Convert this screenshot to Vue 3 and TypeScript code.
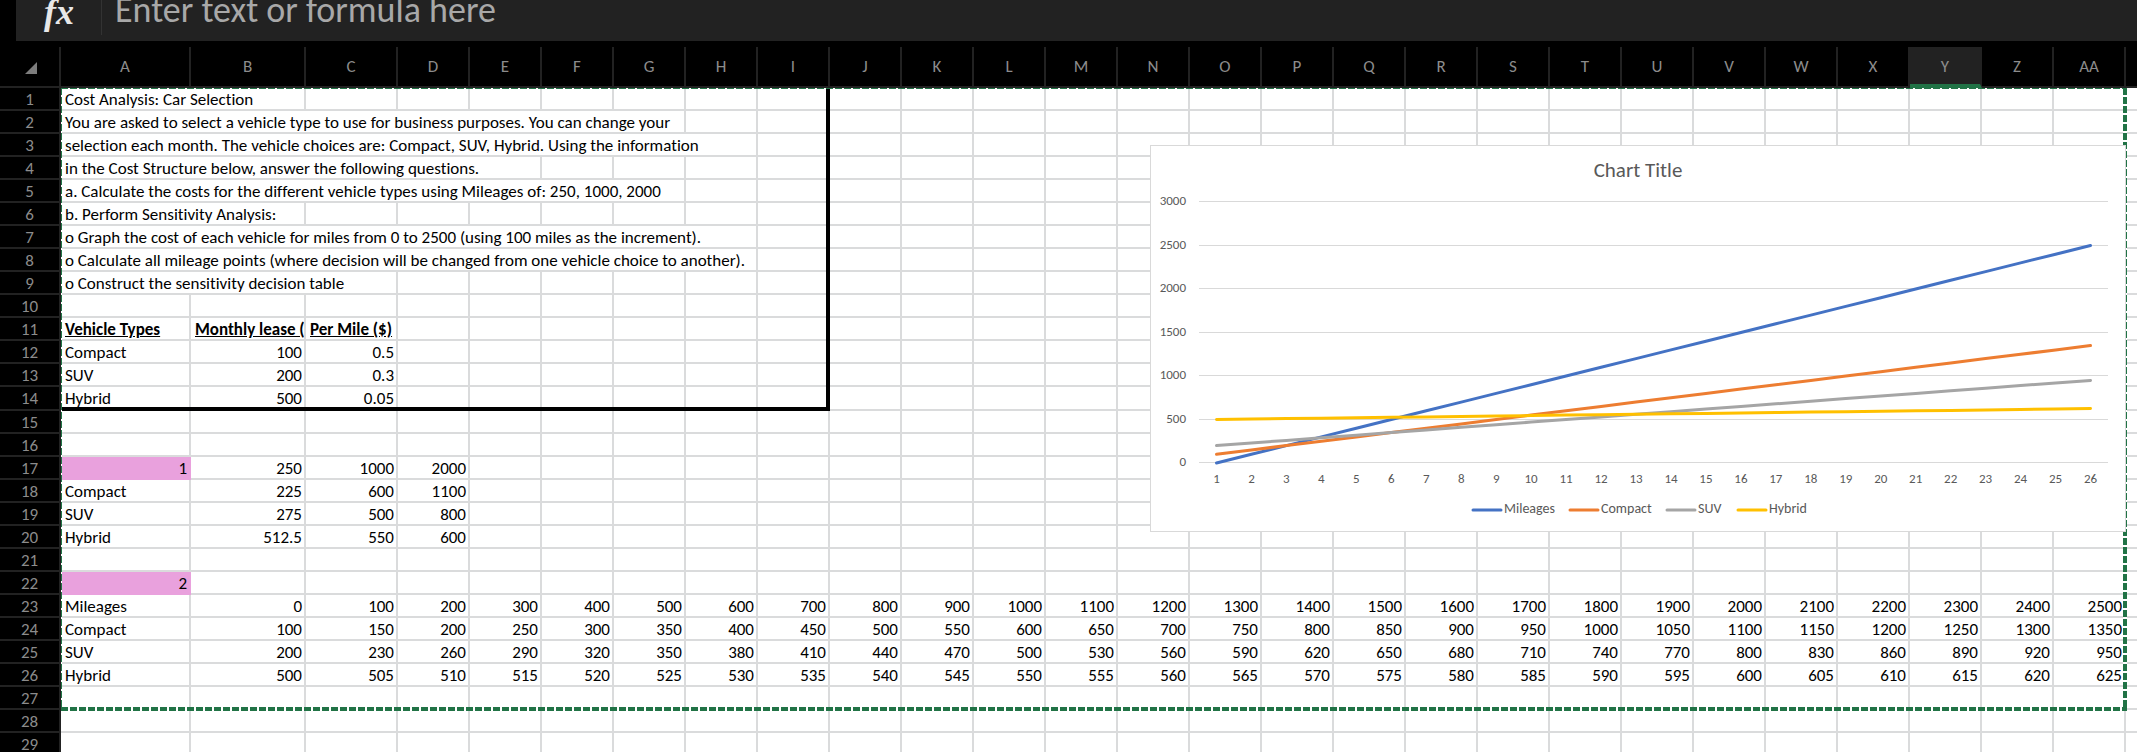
<script setup lang="ts">
interface Cell {
  text: string
  span: number
  col: number
  kind: string
}

const columns: string[] = [...'ABCDEFGHIJKLMNOPQRSTUVWXYZ'.split(''), 'AA']
const widthOf = (i: number): number => (i === 0 ? 130 : i === 1 ? 115 : i === 2 ? 92 : 72)

const mileages = Array.from({ length: 26 }, (_, i) => i * 100)
const series = [
  { name: 'Mileages', color: '#4472c4', values: mileages, legendX: 322 },
  { name: 'Compact', color: '#ed7d31', values: mileages.map((m) => 100 + m * 0.5), legendX: 419 },
  { name: 'SUV', color: '#a5a5a5', values: mileages.map((m) => 200 + m * 0.3), legendX: 516 },
  { name: 'Hybrid', color: '#ffc000', values: mileages.map((m) => 500 + m * 0.05), legendX: 587 },
]

const notes: Record<number, [string, number]> = {
  1: ['Cost Analysis: Car Selection', 2],
  2: ['You are asked to select a vehicle type to use for business purposes. You can change your', 7],
  3: ['selection each month. The vehicle choices are: Compact, SUV, Hybrid. Using the information', 8],
  4: ['in the Cost Structure below, answer the following questions.', 5],
  5: ['a. Calculate the costs for the different vehicle types using Mileages of: 250, 1000, 2000', 7],
  6: ['b. Perform Sensitivity Analysis:', 2],
  7: ['o Graph the cost of each vehicle for miles from 0 to 2500 (using 100 miles as the increment).', 8],
  8: ['o Calculate all mileage points (where decision will be changed from one vehicle choice to another).', 8],
  9: ['o Construct the sensitivity decision table', 3],
}

const values: Record<number, (string | number)[]> = {
  11: ['Vehicle Types', 'Monthly lease ($)', 'Per Mile ($)'],
  12: ['Compact', 100, 0.5],
  13: ['SUV', 200, 0.3],
  14: ['Hybrid', 500, 0.05],
  17: [1, 250, 1000, 2000],
  18: ['Compact', 225, 600, 1100],
  19: ['SUV', 275, 500, 800],
  20: ['Hybrid', 512.5, 550, 600],
  22: [2],
}
series.forEach((s, i) => {
  values[23 + i] = [s.name, ...s.values]
})

function buildRow(n: number): Cell[] {
  const cells: Cell[] = []
  let col = 0
  const note = notes[n]
  if (note) {
    cells.push({ text: note[0], span: note[1], col: 0, kind: 'label' })
    col = note[1]
  }
  for (; col < 28; col++) {
    const value = note ? undefined : values[n]?.[col]
    const kinds: string[] = [typeof value === 'number' ? 'number' : 'label']
    if (n === 11) kinds.push('heading')
    if ((n === 17 || n === 22) && col === 0) kinds.push('marked')
    cells.push({ text: value === undefined ? '' : String(value), span: 1, col, kind: kinds.join(' ') })
  }
  return cells
}
const rows = Array.from({ length: 29 }, (_, i) => ({ n: i + 1, cells: buildRow(i + 1) }))

/* Chart geometry, in the chart's own units */
const plot = { left: 48, right: 957, top: 56, bottom: 317 }
const step = (plot.right - plot.left) / 26
const px = (i: number): number => plot.left + step * (i + 0.5)
const py = (v: number): number => plot.bottom - (v / 3000) * (plot.bottom - plot.top)
const ticks = [3000, 2500, 2000, 1500, 1000, 500, 0]
const points = (v: number[]): string => v.map((y, i) => `${px(i).toFixed(1)},${py(y).toFixed(1)}`).join(' ')
</script>

<template>
  <main class="app">
    <div class="formula-bar">
      <span class="fx">fx</span>
      <input class="formula" type="text" aria-label="Formula" placeholder="Enter text or formula here" />
    </div>

    <div class="sheet">
      <table class="grid">
        <colgroup>
          <col class="col-head" />
          <col v-for="(c, i) in columns" :key="c" :style="{ width: widthOf(i) + 'px' }" />
          <col />
        </colgroup>
        <thead>
          <tr>
            <th class="corner">
              <button type="button" aria-label="Select all">
                <svg viewBox="0 0 12 12" width="12" height="12"><path d="M12 0V12H0Z" fill="#7d7d7d" /></svg>
              </button>
            </th>
            <th v-for="c in columns" :key="c" scope="col" :class="{ active: c === 'Y' }">{{ c }}</th>
            <th></th>
          </tr>
        </thead>
        <tbody>
          <tr v-for="row in rows" :key="row.n" :class="{ last: row.n === 14 }">
            <th scope="row">{{ row.n }}</th>
            <td v-for="cell in row.cells" :key="cell.col" :colspan="cell.span" :class="cell.kind">{{ cell.text }}</td>
          </tr>
        </tbody>
      </table>

      <div class="frame"></div>
      <div class="marquee">
        <i class="ants top"></i>
        <i class="ants left"></i>
        <i class="ants right"></i>
        <i class="ants bottom"></i>
      </div>

      <figure class="chart">
        <svg viewBox="0 0 974 385" role="img" aria-label="Chart Title">
          <text class="title" x="487" y="31" text-anchor="middle">Chart Title</text>
          <g v-for="t in ticks" :key="t">
            <line :x1="plot.left" :x2="plot.right" :y1="Math.round(py(t)) - 0.5" :y2="Math.round(py(t)) - 0.5" stroke="#d9d9d9" />
            <text x="35" :y="Math.round(py(t)) + 3" text-anchor="end">{{ t }}</text>
          </g>
          <text v-for="i in 26" :key="i" :x="px(i - 1)" y="337" text-anchor="middle">{{ i }}</text>
          <polyline
            v-for="s in series"
            :key="s.name"
            :points="points(s.values)"
            :stroke="s.color"
            fill="none"
            stroke-width="3"
            stroke-linecap="round"
            stroke-linejoin="round"
          />
          <g v-for="s in series" :key="s.name">
            <line :x1="s.legendX" :x2="s.legendX + 28" y1="364" y2="364" :stroke="s.color" stroke-width="3" stroke-linecap="round" />
            <text class="legend" :x="s.legendX + 31" y="367">{{ s.name }}</text>
          </g>
        </svg>
      </figure>
    </div>
  </main>
</template>

<style>
html,
body {
  margin: 0;
  background: #000;
  overflow: hidden;
}
</style>

<style scoped>
.app {
  font-family: Calibri, Carlito, Lato, sans-serif;
  font-size: 17px;
  font-variant-ligatures: none;
  color: #000;
  background: #000;
}
.formula-bar {
  display: flex;
  height: 41px;
  margin-left: 16px;
  background: #222;
}
.fx {
  box-sizing: border-box;
  width: 86px;
  height: 35px;
  padding-left: 28px;
  border-right: 1px solid #333;
  font: italic bold 36px/24px 'Liberation Serif', serif;
  font-variant-ligatures: none;
  color: #e8e8e8;
}
.formula {
  flex: 1;
  height: 35px;
  padding: 0 0 15px 13px;
  box-sizing: border-box;
  border: 0;
  outline: 0;
  background: none;
  font-family: inherit;
  font-size: 36px;
  line-height: 20px;
  color: #fff;
}
.formula::placeholder {
  color: #a8a8a8;
  opacity: 1;
}
.sheet {
  position: relative;
  padding-top: 6px;
}
.grid {
  width: 100%;
  table-layout: fixed;
  border-collapse: separate;
  border-spacing: 0;
}
.col-head {
  width: 61px;
}
th {
  box-sizing: border-box;
  padding: 0;
  font-weight: 400;
  color: #8c8c8c;
  background: #000;
  border-right: 2px solid #222;
  border-bottom: 2px solid #222;
}
thead th {
  height: 41px;
}
thead th.active {
  background: #222;
  border-bottom: 4px solid #217346;
  padding-top: 2px;
}
.corner button {
  display: block;
  margin: 2px 0 0 25px;
  padding: 0;
  border: 0;
  background: none;
  line-height: 0;
}
tbody th {
  padding-top: 2px;
}
tbody tr {
  height: 23px;
}
tbody tr.last {
  height: 24px;
}
tbody th,
td {
  line-height: 19px;
  vertical-align: top;
}
td {
  box-sizing: border-box;
  padding: 2px 2px 0 4px;
  overflow: hidden;
  white-space: nowrap;
  background: #fff;
  border-right: 2px solid #dadbdc;
  border-bottom: 2px solid #dadbdc;
}
td:last-child,
thead th:last-child {
  border-right: 0;
}
.number {
  text-align: right;
}
.heading {
  font-weight: 700;
  text-decoration: underline;
}
.marked {
  background: #e9a1dd;
  border-color: #e9a1dd;
}
.frame {
  box-sizing: border-box;
  position: absolute;
  top: 47px;
  left: 61px;
  width: 769px;
  height: 323px;
  border: solid #000;
  border-width: 0 4px 4px 0;
  pointer-events: none;
}
.marquee {
  position: absolute;
  top: 47px;
  left: 61px;
  width: 2066px;
  height: 623px;
  pointer-events: none;
}
.ants {
  position: absolute;
}
.top,
.bottom {
  left: 0;
  right: 0;
  background: repeating-linear-gradient(90deg, #217346 0 7px, #fff 7px 9px);
}
.top {
  top: 0;
  height: 1px;
}
.bottom {
  bottom: 0;
  height: 4px;
}
.left,
.right {
  top: 0;
  bottom: 0;
  background: repeating-linear-gradient(#217346 0 7px, #fff 7px 9px);
}
.left {
  left: 0;
  width: 1px;
}
.right {
  right: 0;
  width: 4px;
}
.chart {
  position: absolute;
  top: 104px;
  left: 1150px;
  width: 974px;
  margin: 0;
  background: #fff;
  border: 1px solid #d9d9d9;
}
.chart svg {
  display: block;
  width: 100%;
}
.chart text {
  font-size: 13px;
  fill: #595959;
}
.chart .legend {
  font-size: 14px;
}
.chart .title {
  font-size: 21px;
}
</style>
